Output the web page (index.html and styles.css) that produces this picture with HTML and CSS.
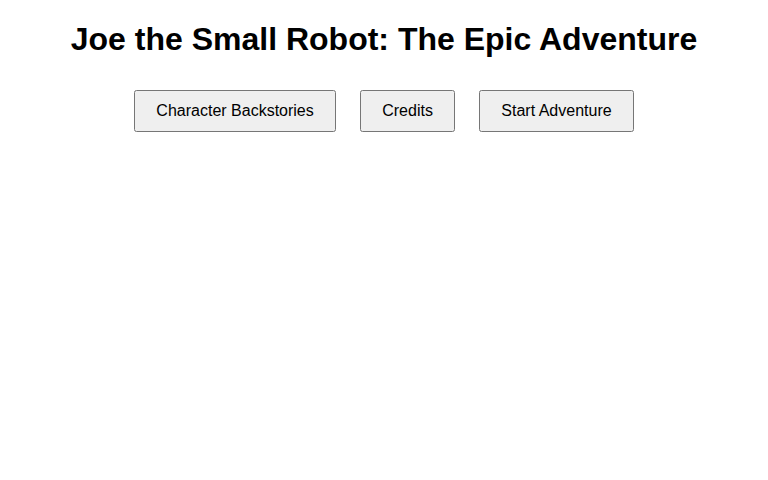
FILE: index.html
```html
<!DOCTYPE html>
<html>
<head>
    <title>Joe the Small Robot: The Epic Adventure</title>
    <link rel="stylesheet" href="styles.css">
</head>
<body>
    <h1>Joe the Small Robot: The Epic Adventure</h1>
    <div class="menu">
        <button id="backstories">Character Backstories</button>
        <button id="credits">Credits</button>
        <button id="start">Start Adventure</button>
    </div>
</body>
</html>
```

FILE: styles.css
```css
body {
    font-family: "Liberation Sans", Arial, sans-serif;
    margin: 0;
    padding: 0;
    text-align: center;
    background-color: #fff;
}

h1 {
    color: #000;
}

.menu {
    margin: 0;
}

.menu button {
    font-family: "Liberation Sans", Arial, sans-serif;
    font-size: 16px;
    padding: 10px 20px;
    margin: 10px;
}
```
